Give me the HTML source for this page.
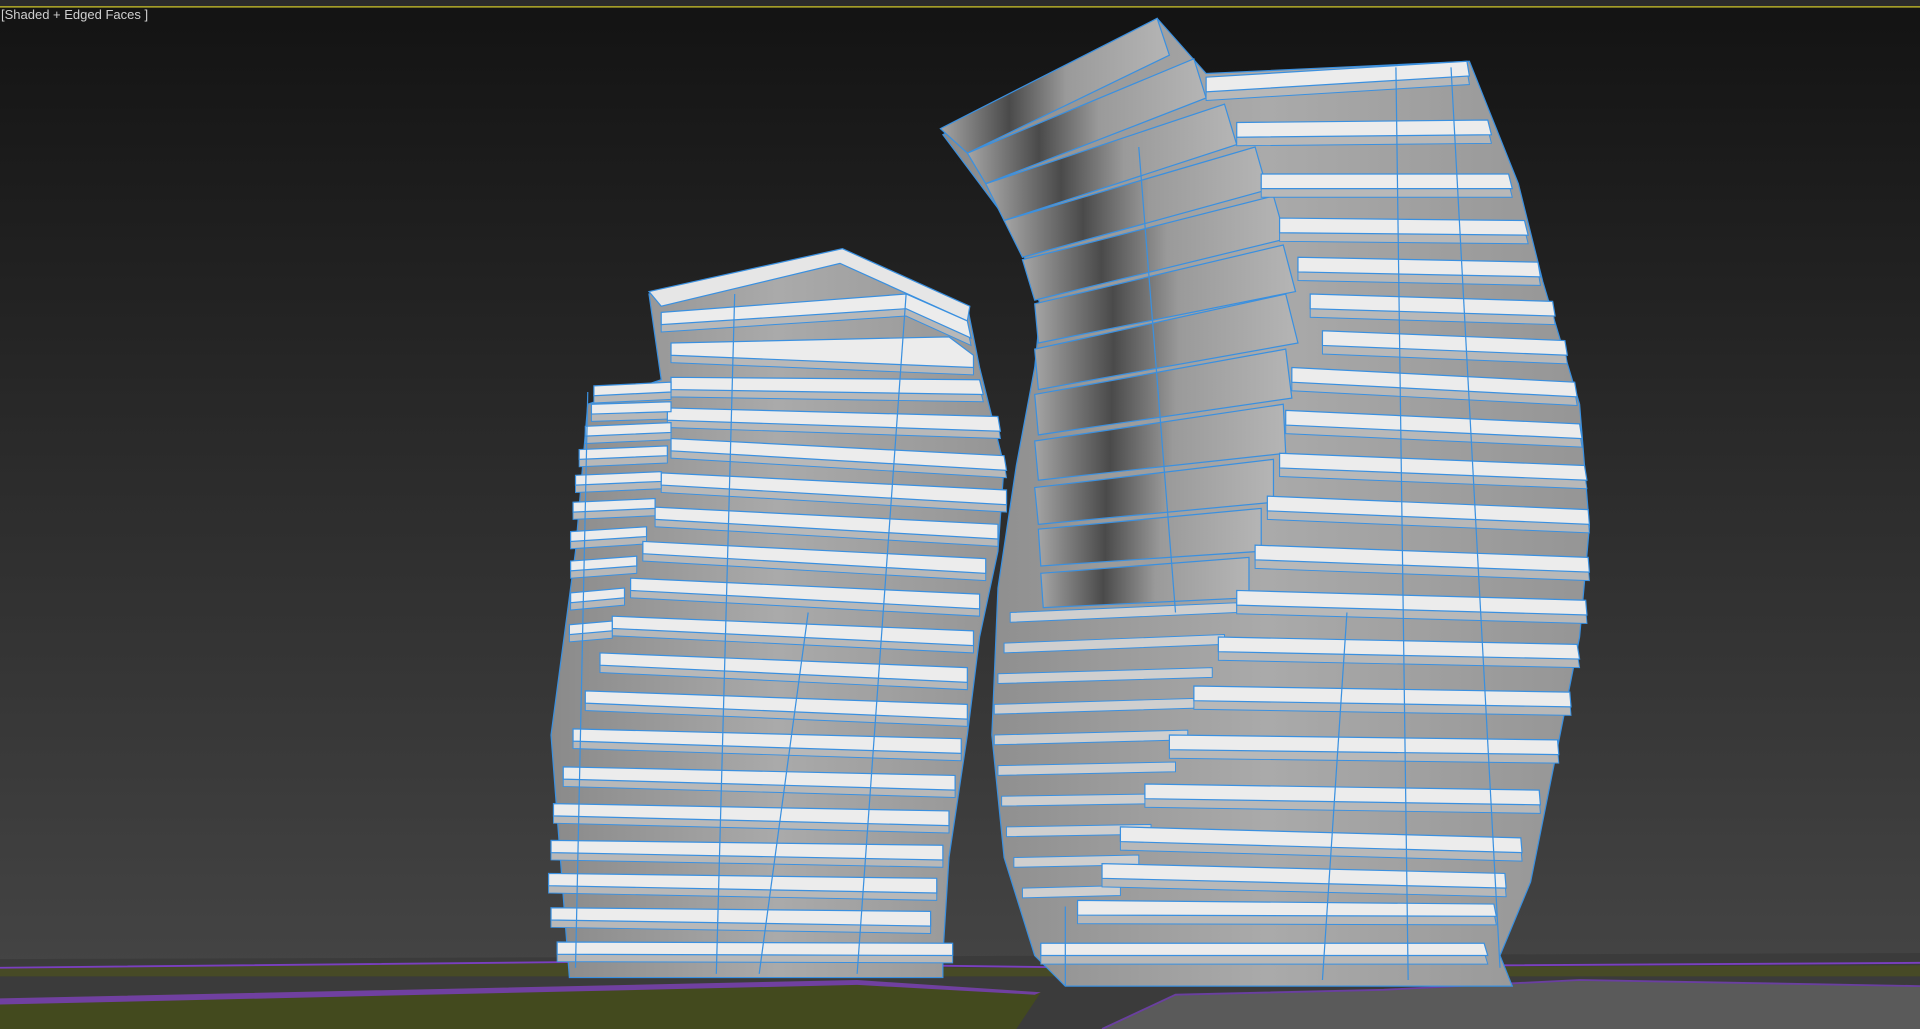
<!DOCTYPE html>
<html><head><meta charset="utf-8"><style>
html,body{margin:0;padding:0;width:1920px;height:1029px;overflow:hidden;background:#1a1a1a}
.lbl{position:absolute;left:1px;top:7px;font:13px "Liberation Sans",sans-serif;color:#d0d0d0}
svg{position:absolute;left:0;top:0}
</style></head><body>
<svg width="1920" height="1029" viewBox="0 0 1568 840" preserveAspectRatio="none">
<defs>
<linearGradient id="bg" x1="0" y1="0" x2="0" y2="1"><stop offset="0" stop-color="#131313"/><stop offset="0.45" stop-color="#2b2b2b"/><stop offset="1" stop-color="#474747"/></linearGradient>
<linearGradient id="body" x1="0" y1="0" x2="1" y2="0"><stop offset="0" stop-color="#8a8a8a"/><stop offset="0.5" stop-color="#aaaaaa"/><stop offset="1" stop-color="#959595"/></linearGradient>
<linearGradient id="dark" x1="0" y1="0" x2="1" y2="0"><stop offset="0" stop-color="#a5a5a5"/><stop offset="0.3" stop-color="#4a4a4a"/><stop offset="0.55" stop-color="#9a9a9a"/><stop offset="1" stop-color="#b5b5b5"/></linearGradient>
<g id="s1">
<polygon points="540,255 740,240 790,262 793,276 740,252 540,265"/>
<polygon points="548,280 775,275 795,290 795,300 548,290"/>
<polygon points="548,308 800,310 803,322 548,318"/>
<polygon points="545,333 815,340 817,352 545,343"/>
<polygon points="548,358 820,372 822,384 548,368"/>
<polygon points="540,386 822,400 822,412 540,396"/>
<polygon points="535,414 815,428 815,440 535,424"/>
<polygon points="525,442 805,456 805,468 525,452"/>
<polygon points="515,472 800,485 800,497 515,482"/>
<polygon points="500,503 795,515 795,527 500,513"/>
<polygon points="490,533 790,545 790,557 490,543"/>
<polygon points="478,564 790,575 790,587 478,574"/>
<polygon points="468,595 785,603 785,615 468,605"/>
<polygon points="460,626 780,633 780,645 460,636"/>
<polygon points="452,656 775,662 775,674 452,666"/>
<polygon points="450,686 770,690 770,702 450,696"/>
<polygon points="448,713 765,717 765,729 448,723"/>
<polygon points="450,741 760,744 760,756 450,751"/>
<polygon points="455,769 778,770 778,780 455,779"/>
<polygon points="485,315 548,312 548,320 485,323"/>
<polygon points="483,330 548,328 548,336 483,338"/>
<polygon points="478,348 548,345 548,353 478,356"/>
<polygon points="473,367 545,364 545,372 473,375"/>
<polygon points="470,388 540,385 540,393 470,396"/>
<polygon points="468,410 535,407 535,415 468,418"/>
<polygon points="466,434 528,430 528,438 466,442"/>
<polygon points="466,458 520,454 520,462 466,466"/>
<polygon points="466,484 510,480 510,488 466,492"/>
<polygon points="465,510 500,507 500,515 465,518"/>
</g>
<g id="s2">
<polygon points="985,63 1198,50 1200,62 985,75"/>
<polygon points="1010,100 1215,98 1218,110 1010,112"/>
<polygon points="1030,142 1232,142 1235,154 1030,154"/>
<polygon points="1045,178 1245,180 1248,192 1045,190"/>
<polygon points="1060,210 1256,214 1258,226 1060,222"/>
<polygon points="1070,240 1268,246 1270,258 1070,252"/>
<polygon points="1080,270 1278,278 1280,290 1080,282"/>
<polygon points="1055,300 1286,312 1288,324 1055,312"/>
<polygon points="1050,335 1290,346 1292,358 1050,347"/>
<polygon points="1045,370 1294,380 1296,392 1045,382"/>
<polygon points="1035,405 1297,416 1298,428 1035,417"/>
<polygon points="1025,445 1297,455 1298,467 1025,457"/>
<polygon points="1010,482 1295,490 1296,502 1010,494"/>
<polygon points="995,520 1288,526 1290,538 995,532"/>
<polygon points="975,560 1282,565 1283,577 975,572"/>
<polygon points="955,600 1272,604 1273,616 955,612"/>
<polygon points="935,640 1257,645 1258,657 935,652"/>
<polygon points="915,675 1242,684 1243,696 915,687"/>
<polygon points="900,705 1229,713 1230,725 900,717"/>
<polygon points="880,735 1220,738 1222,748 880,747"/>
<polygon points="850,770 1212,770 1215,780 850,780"/>
</g>
</defs>
<rect width="1568" height="840" fill="url(#bg)"/>
<rect x="0" y="0" width="1568" height="5" fill="#2b2b2b"/>
<rect x="0" y="5" width="1568" height="1.2" fill="#b8b02a"/>
<polygon points="0,783 1568,778 1568,840 0,840" fill="#3b3b3b"/>
<polygon points="0,790 480,786 800,790 1568,788 1568,797 0,797" fill="#474a26"/>
<polygon points="0,815 700,800 850,810 830,840 0,840" fill="#434a1e"/>
<polygon points="0,815 700,800 850,810 845,812 700,804 0,820" fill="#7040a0"/>
<polygon points="900,840 960,812 1130,808 1290,800 1568,805 1568,840" fill="#5a5a5a"/>
<polyline points="900,840 960,812 1130,808 1290,800 1568,805" fill="none" stroke="#6a3fa0" stroke-width="1.5"/>
<polyline points="0,790 500,785 900,790 1568,786" fill="none" stroke="#7a3fc0" stroke-width="1.5"/>
<polygon points="530,240 690,205 790,250 800,300 820,380 815,450 800,520 790,600 775,700 770,780 770,798 465,798 450,600 470,450 480,330 540,310" fill="url(#body)" stroke="#3a90e0" stroke-width="1"/>
<polygon points="530,238 688,203 792,250 790,262 686,215 540,250" fill="#e6e6e6" stroke="#3a90e0"/>
<use href="#s1" fill="#b8b8b8" stroke="#3a90e0" stroke-width="0.8" transform="translate(0,6)"/>
<use href="#s1" fill="#ececec" stroke="#3a90e0" stroke-width="1"/>
<g stroke="#3a90e0" stroke-width="1"><line x1="600" y1="240" x2="585" y2="795"/><line x1="740" y1="240" x2="700" y2="795"/><line x1="480" y1="320" x2="470" y2="790"/><line x1="660" y1="500" x2="620" y2="795"/></g>
<polygon points="985,60 1200,50 1240,150 1260,230 1290,330 1298,430 1290,520 1270,620 1250,720 1225,780 1235,805 870,805 845,780 820,700 810,600 815,480 830,380 845,300 850,250 830,190 770,110 945,15 985,60" fill="url(#body)" stroke="#3a90e0" stroke-width="1"/>
<g fill="url(#dark)" stroke="#3a90e0" stroke-width="1">
<polygon points="768,105 945,15 955,45 790,125"/>
<polygon points="790,125 975,48 985,80 805,150"/>
<polygon points="805,150 1000,85 1010,118 820,180"/>
<polygon points="820,180 1025,120 1035,155 835,210"/>
<polygon points="835,212 1040,160 1050,195 845,245"/>
<polygon points="845,248 1048,200 1058,238 848,280"/>
<polygon points="845,285 1050,240 1060,280 848,318"/>
<polygon points="845,322 1050,285 1055,325 848,355"/>
<polygon points="845,360 1048,330 1050,370 848,392"/>
<polygon points="845,398 1040,375 1040,410 848,428"/>
<polygon points="848,432 1030,415 1030,450 850,462"/>
<polygon points="850,468 1020,455 1020,488 852,496"/>
</g>
<g fill="#cfcfcf" stroke="#3a90e0" stroke-width="0.8">
<polygon points="825,500 1010,492 1010,500 825,508"/>
<polygon points="820,525 1000,518 1000,526 820,533"/>
<polygon points="815,550 990,545 990,553 815,558"/>
<polygon points="812,575 980,570 980,578 812,583"/>
<polygon points="812,600 970,596 970,604 812,608"/>
<polygon points="815,625 960,622 960,630 815,633"/>
<polygon points="818,650 950,648 950,656 818,658"/>
<polygon points="822,675 940,673 940,681 822,683"/>
<polygon points="828,700 930,698 930,706 828,708"/>
<polygon points="835,725 915,723 915,731 835,733"/>
</g>
<use href="#s2" fill="#b8b8b8" stroke="#3a90e0" stroke-width="0.8" transform="translate(0,7)"/>
<use href="#s2" fill="#ececec" stroke="#3a90e0" stroke-width="1"/>
<g stroke="#3a90e0" stroke-width="1"><line x1="1140" y1="55" x2="1150" y2="800"/><line x1="1185" y1="55" x2="1225" y2="790"/><line x1="930" y1="120" x2="960" y2="500"/><line x1="1100" y1="500" x2="1080" y2="800"/><line x1="870" y1="740" x2="870" y2="805"/></g>
</svg>
<div class="lbl">[Shaded + Edged Faces ]</div>
</body></html>
